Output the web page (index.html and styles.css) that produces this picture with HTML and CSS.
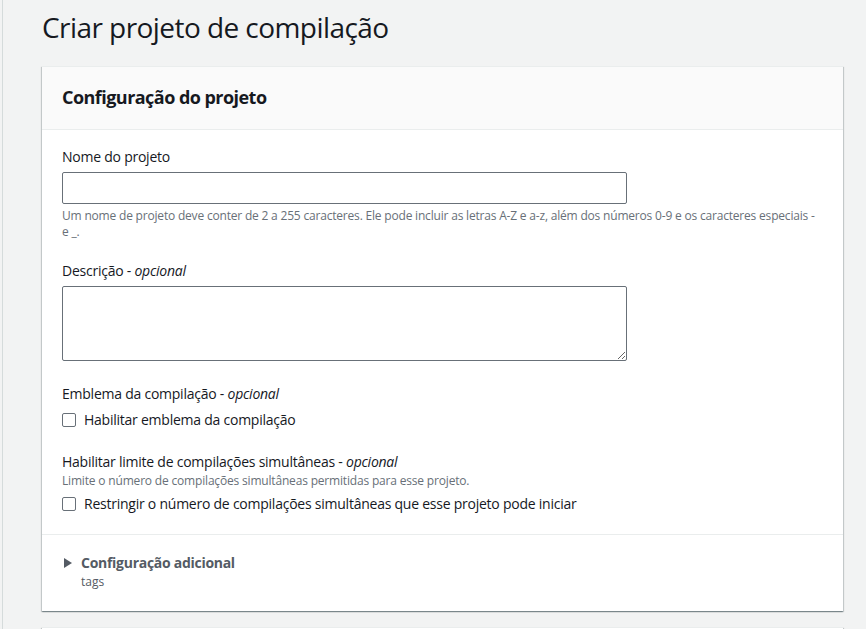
FILE: index.html
```html
<!DOCTYPE html>
<html lang="pt">
<head>
<meta charset="utf-8">
<link rel="stylesheet" href="styles.css">
</head>
<body>
<div class="page">
  <h1 class="title">Criar projeto de compilação</h1>
  <section class="card">
    <header class="card-header"><h2>Configuração do projeto</h2></header>
    <div class="card-body">
      <div class="field">
        <label class="label">Nome do projeto</label>
        <input class="input" type="text">
        <p class="hint">Um nome de projeto deve conter de 2 a 255 caracteres. Ele pode incluir as letras A-Z e a-z, além dos números 0-9 e os caracteres especiais&nbsp;- e _.</p>
      </div>
      <div class="field field-wide">
        <label class="label">Descrição - <i>opcional</i></label>
        <textarea class="textarea"></textarea>
      </div>
      <div class="field">
        <label class="label">Emblema da compilação - <i>opcional</i></label>
        <label class="check"><span class="box"></span>Habilitar emblema da compilação</label>
      </div>
      <div class="field">
        <label class="label">Habilitar limite de compilações simultâneas - <i>opcional</i></label>
        <p class="desc">Limite o número de compilações simultâneas permitidas para esse projeto.</p>
        <label class="check"><span class="box"></span>Restringir o número de compilações simultâneas que esse projeto pode iniciar</label>
      </div>
    </div>
    <div class="expand">
      <div class="expand-title"><span class="caret"></span>Configuração adicional</div>
      <div class="expand-sub">tags</div>
    </div>
  </section>
  <section class="card next"></section>
</div>
</body>
</html>
```
FILE: styles.css
```css
html, body { margin: 0; padding: 0; }
body {
  background: #f2f3f3;
  font-family: "Open Sans", "Noto Sans", sans-serif;
  letter-spacing: -0.015em;
  color: #16191f;
  height: 629px;
  overflow: hidden;
}
.page {
  margin-left: 2px;
  border-left: 1px solid #d5dbdb;
  padding: 0 23px 0 39px;
  min-height: 629px;
}
.title {
  margin: 0;
  padding-top: 7px;
  height: 66px;
  box-sizing: border-box;
  font-size: 28px;
  font-weight: 400;
  line-height: 40px;
  letter-spacing: -0.02em;
  color: #16191f;
}
.card {
  background: #fff;
  border-top: 1px solid #eaeded;
  box-shadow: 0 1px 1px 0 rgba(0,28,36,.3), 1px 1px 1px 0 rgba(0,28,36,.15), -1px 1px 1px 0 rgba(0,28,36,.15);
}
.card-header {
  background: #fafafa;
  border-bottom: 1px solid #eaeded;
  height: 63px;
  box-sizing: border-box;
  padding: 0 20px 3px;
  display: flex;
  align-items: center;
}
.card-header h2 {
  margin: 0;
  font-size: 18px;
  font-weight: 700;
  line-height: 22px;
  letter-spacing: -0.03em;
}
.card-body {
  padding: 16px 20px 19px;
  border-bottom: 1px solid #eaeded;
}
.field { margin-bottom: 20px; }
.field-wide { margin-bottom: 22px; }
.field:last-child { margin-bottom: 0; }
.label {
  display: block;
  font-size: 14px;
  line-height: 22px;
  margin-bottom: 4px;
}
.label i { font-style: italic; }
.input {
  display: block;
  width: 565px;
  height: 32px;
  box-sizing: border-box;
  border: 1px solid #687078;
  border-radius: 2px;
  background: #fff;
  margin: 0;
}
.textarea {
  display: block;
  width: 565px;
  height: 75px;
  box-sizing: border-box;
  border: 1px solid #687078;
  border-radius: 2px;
  margin: 0;
  resize: vertical;
}
.hint {
  margin: 4px 0 0;
  font-size: 12px;
  line-height: 16px;
  letter-spacing: -0.016em;
  color: #687078;
}
.desc {
  margin: -4px 0 4px;
  font-size: 12px;
  line-height: 16px;
  letter-spacing: -0.015em;
  color: #687078;
}
.check {
  display: flex;
  align-items: center;
  font-size: 14px;
  line-height: 22px;
}
.box {
  width: 14px;
  height: 14px;
  box-sizing: border-box;
  border: 1px solid #687078;
  border-radius: 2px;
  margin-right: 8px;
  background: #fff;
}
.expand {
  padding: 18px 20px 20px;
  height: 76px;
  box-sizing: border-box;
}
.expand-title {
  display: flex;
  align-items: center;
  font-size: 14px;
  font-weight: 700;
  line-height: 20px;
  letter-spacing: -0.02em;
  color: #545b64;
}
.caret {
  width: 0; height: 0;
  border-top: 5px solid transparent;
  border-bottom: 5px solid transparent;
  border-left: 8px solid #545b64;
  margin: 0 9px 0 2px;
}
.expand-sub {
  padding-left: 19px;
  font-size: 12px;
  line-height: 18px;
  letter-spacing: 0;
  color: #545b64;
}
.next {
  margin-top: 16px;
  height: 40px;
}
```
